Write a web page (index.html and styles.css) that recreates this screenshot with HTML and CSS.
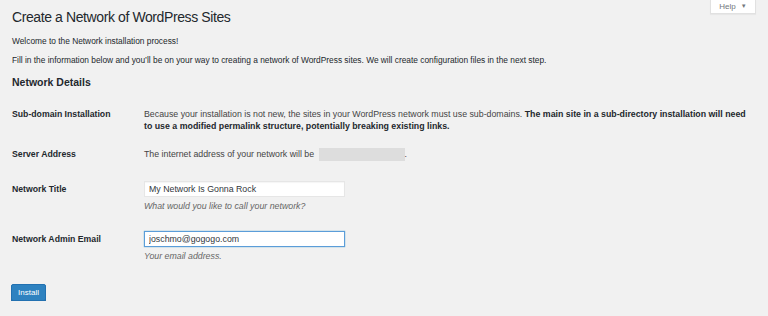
FILE: index.html
```html
<!DOCTYPE html>
<html>
    <head>
        <meta charset="UTF-8">
        <meta name="viewport" content="width=device-width,initial-scale=1">
        <title>Create a Network of WordPress Sites</title>
        <link rel="stylesheet" href="styles.css">
    </head>
    <body>
        <div class="wrap">
            <div class="top-row">
                <h1>Create a Network of WordPress Sites</h1>
                <a class="help-tab" href="#">Help <span class="caret">&#9660;</span></a>
            </div>
            <p class="intro">Welcome to the Network installation process!</p>
            <p class="intro">Fill in the information below and you&rsquo;ll be on your way to creating a network of WordPress sites. We will create configuration files in the next step.</p>
            <h2>Network Details</h2>
            <form class="form-table">
                <div class="row row-subdomain">
                    <p class="label">Sub-domain Installation</p>
                    <p class="field desc">Because your installation is not new, the sites in your WordPress network must use sub-domains. <b>The main site in a sub-directory installation will need to use a modified permalink structure, potentially breaking existing links.</b></p>
                </div>
                <div class="row row-server">
                    <p class="label">Server Address</p>
                    <p class="field desc">The internet address of your network will be <span class="redacted"></span>.</p>
                </div>
                <div class="row row-title">
                    <p class="label">Network Title</p>
                    <div class="field">
                        <input type="text" class="inputs" value="My Network Is Gonna Rock">
                        <p class="hint">What would you like to call your network?</p>
                    </div>
                </div>
                <div class="row row-email">
                    <p class="label">Network Admin Email</p>
                    <div class="field">
                        <input type="text" class="inputs focused" value="joschmo@gogogo.com">
                        <p class="hint">Your email address.</p>
                    </div>
                </div>
                <button type="button" class="button-primary">Install</button>
            </form>
        </div>
    </body>
</html>
```

FILE: styles.css
```css
*, *::before, *::after {
    box-sizing: border-box;
}
html, body {
    margin: 0;
    padding: 0;
}
body {
    background-color: rgb(241, 241, 241);
    color: rgb(68, 68, 68);
    font-family: "Liberation Sans", Arial, sans-serif;
    font-size: 8.8px;
}
.wrap {
    padding: 0 12px 0 12px;
}
.top-row {
    display: flex;
    justify-content: space-between;
    align-items: flex-start;
}
h1 {
    margin: 0;
    padding-top: 7px;
    font-size: 14px;
    font-weight: normal;
    letter-spacing: -0.4px;
    line-height: 20px;
    color: rgb(35, 40, 45);
}
.help-tab {
    display: block;
    width: 46px;
    height: 14px;
    line-height: 13px;
    text-align: center;
    font-size: 8px;
    color: rgb(114, 119, 124);
    text-decoration: none;
    background-color: rgb(255, 255, 255);
    border: 1px solid rgb(225, 225, 225);
    border-top: none;
    box-shadow: 0 1px 1px rgba(0, 0, 0, 0.04);
}
.caret {
    font-size: 6px;
    vertical-align: 1px;
    margin-left: 3px;
}
.intro {
    margin: 0;
    line-height: 11px;
    font-size: 8.35px;
    color: rgb(35, 40, 45);
}
.intro:first-of-type {
    margin-top: 9px;
}
.intro + .intro {
    margin-top: 8px;
}
h2 {
    margin: 9px 0 0 0;
    font-size: 10.5px;
    line-height: 14px;
    color: rgb(35, 40, 45);
}
.form-table {
    margin-top: 19px;
}
.row {
    display: grid;
    grid-template-columns: 132px 1fr;
    align-items: start;
}
.label, .desc {
    margin: 0;
    line-height: 12px;
}
.label {
    font-size: 8.7px;
    font-weight: bold;
    color: rgb(35, 40, 45);
}
.desc b {
    color: rgb(35, 40, 45);
}
.row-server {
    margin-top: 16px;
}
.row-server .label, .row-server .desc {
    line-height: 13px;
}
.redacted {
    display: inline-block;
    width: 86px;
    height: 13px;
    vertical-align: top;
    margin-left: 2px;
    background-color: rgb(221, 221, 221);
}
.row-title {
    margin-top: 20px;
}
.row-email {
    margin-top: 19px;
}
.row-title .label, .row-email .label {
    line-height: 16px;
}
.inputs {
    display: block;
    width: 201px;
    height: 16px;
    margin: 0;
    padding: 0 4px;
    font-family: "Liberation Sans", Arial, sans-serif;
    font-size: 8.8px;
    color: rgb(50, 55, 60);
    background-color: rgb(255, 255, 255);
    border: 1px solid rgb(230, 230, 230);
    box-shadow: inset 0 1px 1px rgba(0, 0, 0, 0.04);
    outline: none;
}
.inputs.focused {
    border-color: rgb(91, 157, 217);
    box-shadow: 0 0 1px rgba(30, 140, 190, 0.8);
}
.hint {
    margin: 3px 0 0 0;
    line-height: 12px;
    font-style: italic;
    color: rgb(102, 102, 102);
}
.button-primary {
    display: block;
    margin: 22px 0 0 -1px;
    width: 35px;
    height: 17px;
    padding: 0;
    font-family: "Liberation Sans", Arial, sans-serif;
    font-size: 8px;
    color: rgb(255, 255, 255);
    background-color: rgb(46, 130, 192);
    border: 1px solid rgb(34, 113, 177);
    border-radius: 2px;
    box-shadow: 0 1px 0 rgb(30, 100, 160);
}
```
